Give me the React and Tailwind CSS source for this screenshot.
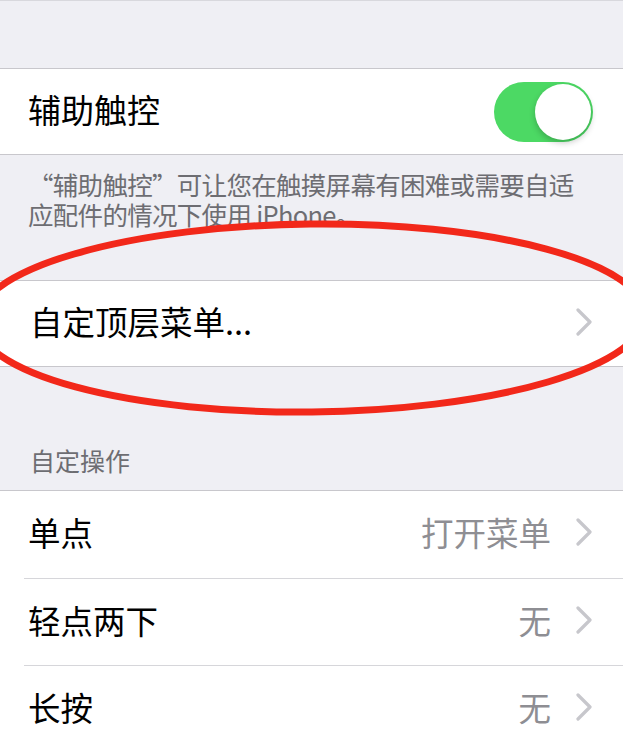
const font = { fontFamily: '"Noto Sans CJK SC", "Noto Sans", sans-serif' };

function Chevron() {
  return (
    <svg width="16" height="28" viewBox="0 0 16 28" className="shrink-0">
      <path
        d="M2 2 L14 14 L2 26"
        fill="none"
        stroke="#c7c7cc"
        strokeWidth="3.2"
        strokeLinecap="round"
        strokeLinejoin="round"
      />
    </svg>
  );
}

function Toggle() {
  return (
    <div className="relative h-[60px] w-[99px] shrink-0 rounded-full bg-[#4cd964]">
      <div className="absolute right-[2px] top-[2px] h-[56px] w-[56px] rounded-full bg-white shadow-[0_3px_6px_rgba(0,0,0,0.22)]" />
    </div>
  );
}

function Row({ label, value, divider }) {
  return (
    <div className="relative flex h-[87.5px] items-center pb-[5px] pl-[28px] pr-[31px]">
      <span className="flex-1 text-[32.5px] leading-none text-black">{label}</span>
      {value && (
        <span className="mr-[25px] text-[32.5px] leading-none text-[#8e8e93]">{value}</span>
      )}
      <Chevron />
      {divider && (
        <div className="absolute bottom-0 left-[24px] right-0 h-px bg-[#d6d6da]" />
      )}
    </div>
  );
}

export default function App() {
  return (
    <div
      className="relative h-[731px] w-[623px] overflow-hidden bg-[#efeff4]"
      style={font}
    >
      <div className="h-px bg-[#d8d8dd]" />
      <div className="h-[67px]" />

      {/* Assistive touch switch */}
      <div className="flex h-[87px] items-center border-y border-[#c8c7cc] bg-white pl-[28px] pr-[30px]">
        <span className="flex-1 pb-[5px] text-[33px] leading-none text-black">辅助触控</span>
        <Toggle />
      </div>

      <p className="px-[28px] pt-[14px] text-[25.5px] leading-[30px] tracking-[-0.7px] text-[#6d6d72]">
        “辅助触控”可让您在触摸屏幕有困难或需要自适
        <br />
        应配件的情况下使用 iPhone。
      </p>

      <div className="h-[51px]" />

      {/* Customize top level menu */}
      <div className="flex h-[87px] items-center border-y border-[#c8c7cc] bg-white pb-[4px] pl-[30px] pr-[31px]">
        <span className="flex-1 text-[32.5px] leading-none text-black">自定顶层菜单...</span>
        <Chevron />
      </div>

      <div className="flex h-[123px] items-end px-[30px] pb-[17px]">
        <span className="text-[25px] leading-none text-[#6d6d72]">自定操作</span>
      </div>

      <div className="border-t border-[#c8c7cc] bg-white">
        <Row label="单点" value="打开菜单" divider />
        <Row label="轻点两下" value="无" divider />
        <Row label="长按" value="无" />
      </div>

      {/* hand-drawn red ellipse annotation */}
      <svg
        className="pointer-events-none absolute inset-0"
        width="623"
        height="731"
        viewBox="0 0 623 731"
      >
        <ellipse
          cx="311"
          cy="318"
          rx="334"
          ry="94"
          fill="none"
          stroke="#f2281a"
          strokeWidth="7"
          transform="rotate(-0.6 311 318)"
        />
      </svg>
    </div>
  );
}
